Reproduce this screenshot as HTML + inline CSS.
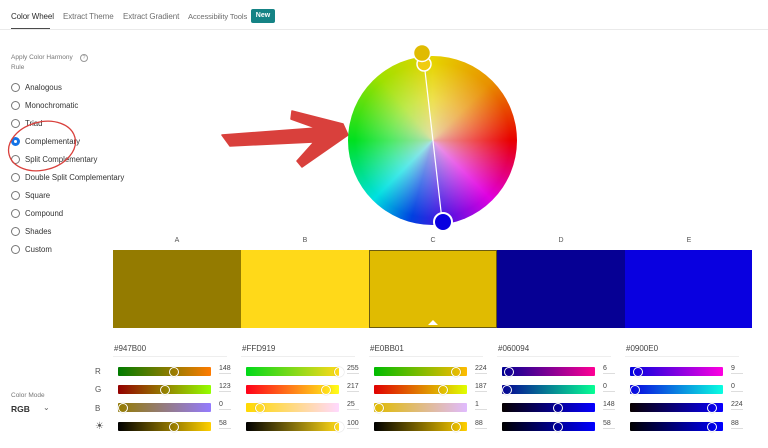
<!DOCTYPE html>
<html><head><style>
*{margin:0;padding:0;box-sizing:border-box}
body{width:768px;height:448px;background:#fff;font-family:"Liberation Sans",sans-serif;color:#323232;position:relative;overflow:hidden}
.a{position:absolute}
.tab{position:absolute;top:12px;font-size:8px;color:#6e6e6e;white-space:nowrap;letter-spacing:-0.1px}
.opt{position:absolute;left:11px;font-size:7.8px;color:#333}
.opt i{position:absolute;left:0;top:0;width:9px;height:9px;border:1.3px solid #777;border-radius:50%}
.opt span{position:absolute;left:14px;top:0;white-space:nowrap}
.sw{position:absolute;top:250px;height:78px;width:128px}
.lbl{position:absolute;top:237px;font-size:7px;color:#555;width:128px;text-align:center}
.hex{position:absolute;top:344px;font-size:8px;color:#444}
.hl{position:absolute;top:356px;height:1px;width:114px;background:#eee}
.tr{position:absolute;height:9px;width:93px;border-radius:1px}
.k{position:absolute;width:10px;height:10px;border:1.3px solid #fff;border-radius:50%;top:-0.5px;margin-left:-5px;box-shadow:0 0 1px rgba(0,0,0,.4)}
.v{position:absolute;font-size:7px;color:#444;border-bottom:1px solid #ddd;width:12px;padding-bottom:1px}
.rl{position:absolute;left:95px;font-size:8px;color:#555}
</style></head><body>
<div class="tab" style="left:11px;color:#2c2c2c">Color Wheel</div>
<div class="a" style="left:11px;top:28px;width:39px;height:2px;background:#4b4b4b"></div>
<div class="a" style="left:0;top:29px;width:768px;height:1px;background:#eaeaea"></div>
<div class="tab" style="left:63px">Extract Theme</div>
<div class="tab" style="left:123px">Extract Gradient</div>
<div class="tab" style="left:188px;font-size:7.6px">Accessibility Tools</div>
<div class="a" style="left:251px;top:9px;width:24px;height:14px;background:#158385;border-radius:2px;color:#fff;font-size:7px;text-align:center;line-height:14px;font-weight:bold">New</div>
<div class="a" style="left:11px;top:53px;font-size:6.5px;color:#777;line-height:10px">Apply Color Harmony<br>Rule</div>
<div class="a" style="left:80px;top:54px;width:8px;height:8px;border:1px solid #999;border-radius:50%;font-size:5px;text-align:center;line-height:6px;color:#999">?</div>
<div class="opt" style="top:83px"><i></i><span>Analogous</span></div>
<div class="opt" style="top:101px"><i></i><span>Monochromatic</span></div>
<div class="opt" style="top:119px"><i></i><span>Triad</span></div>
<div class="opt" style="top:137px"><i style="border:3px solid #1473e6"></i><span>Complementary</span></div>
<div class="opt" style="top:155px"><i></i><span>Split Complementary</span></div>
<div class="opt" style="top:173px"><i></i><span>Double Split Complementary</span></div>
<div class="opt" style="top:191px"><i></i><span>Square</span></div>
<div class="opt" style="top:209px"><i></i><span>Compound</span></div>
<div class="opt" style="top:227px"><i></i><span>Shades</span></div>
<div class="opt" style="top:245px"><i></i><span>Custom</span></div>
<svg class="a" style="left:0;top:0" width="768" height="250">
<ellipse cx="42" cy="146" rx="34" ry="24" fill="none" stroke="#d9403c" stroke-width="1.3" transform="rotate(-15 42 146)"/>
<path d="M222 135 L316 128 L291 119 L292 111 L343 124 L348 135 L302 167 L297 161 L314 142 L230 146 Z" fill="#d9403c" stroke="#d9403c" stroke-linejoin="round" stroke-width="1.5"/>
</svg>
<div class="a" style="left:348px;top:56px;width:169px;height:169px;border-radius:50%;background:conic-gradient(from 0deg,#e6d400,#e89000 45deg,#e80000 90deg,#e000e0 135deg,#5010e0 170deg,#0040e0 195deg,#00e0e0 225deg,#00e020 270deg,#a0e000 320deg,#e6d400)"></div>
<div class="a" style="left:348px;top:56px;width:169px;height:169px;border-radius:50%;background:radial-gradient(circle,rgba(235,225,230,.75) 0%,rgba(255,255,255,.3) 35%,rgba(255,255,255,0) 65%)"></div>
<svg class="a" style="left:0;top:0" width="768" height="250">
<line x1="424" y1="62" x2="442" y2="220" stroke="#fff" stroke-width="1.2"/>
<circle cx="424" cy="64" r="7" fill="#f0cc10" stroke="#fff" stroke-width="1.5"/>
<circle cx="422" cy="53" r="8.5" fill="#e0bb01" stroke="#fff" stroke-width="1.5"/>
<circle cx="443" cy="222" r="9" fill="#0900e0" stroke="#fff" stroke-width="2"/>
</svg>
<div class="lbl" style="left:113px">A</div><div class="lbl" style="left:241px">B</div><div class="lbl" style="left:369px">C</div><div class="lbl" style="left:497px">D</div><div class="lbl" style="left:625px">E</div>
<div class="sw" style="left:113px;background:#947b00"></div>
<div class="sw" style="left:241px;background:#ffd919"></div>
<div class="sw" style="left:369px;background:#e0bb01;border:1px solid #6a5a10"></div>
<div class="sw" style="left:497px;background:#060094"></div>
<div class="sw" style="left:625px;width:127px;background:#0900e0"></div>
<div class="a" style="left:428px;top:320px;width:0;height:0;border-left:5px solid transparent;border-right:5px solid transparent;border-bottom:5px solid #fff"></div>
<div class="rl" style="top:367px">R</div><div class="rl" style="top:385px">G</div><div class="rl" style="top:404px">B</div><div class="rl" style="top:421px;font-size:10px">☀</div>
<div class="a" style="left:11px;top:392px;font-size:6.5px;color:#777">Color Mode</div>
<div class="a" style="left:11px;top:404px;font-size:8.5px;font-weight:bold;color:#333">RGB</div>
<div class="a" style="left:43px;top:403px;font-size:8px;color:#666">⌄</div>
<div id="cols"></div>
<script>
var cols=[["#947B00",[["#007b00","#ff7b00",.58,148],["#940000","#94ff00",.48,123],["#947b00","#947bff",0,0],["#000","#ffd000",.58,58]]],
["#FFD919",[["#00d919","#ffd919",1,255],["#ff0019","#ffff19",.85,217],["#ffd900","#ffd9ff",.1,25],["#000","#ffd919",1,100]]],
["#E0BB01",[["#00bb01","#ffbb01",.88,224],["#e00001","#e0ff01",.73,187],["#e0bb00","#e0bbff",0,1],["#000","#ffd000",.88,88]]],
["#060094",[["#000094","#ff0094",.02,6],["#060094","#06ff94",0,0],["#060000","#0600ff",.58,148],["#000","#0000ff",.58,58]]],
["#0900E0",[["#0000e0","#ff00e0",.03,9],["#0900e0","#09ffe0",0,0],["#090000","#0900ff",.88,224],["#000","#0000ff",.88,88]]]];
var h="",ys=[367,385,403,422];
cols.forEach(function(c,i){var x=113+128*i;
h+='<div class="hex" style="left:'+(x+1)+'px">'+c[0]+'</div><div class="hl" style="left:'+x+'px"></div>';
c[1].forEach(function(r,j){var y=ys[j];
h+='<div class="tr" style="left:'+(x+5)+'px;top:'+y+'px;background:linear-gradient(90deg,'+r[0]+','+r[1]+')"><div class="k" style="left:'+(r[2]*88+5)+'px"></div></div><div class="v" style="left:'+(x+106)+'px;top:'+(y-2)+'px">'+r[3]+'</div>';});});
document.getElementById('cols').innerHTML=h;
</script>
</body></html>
